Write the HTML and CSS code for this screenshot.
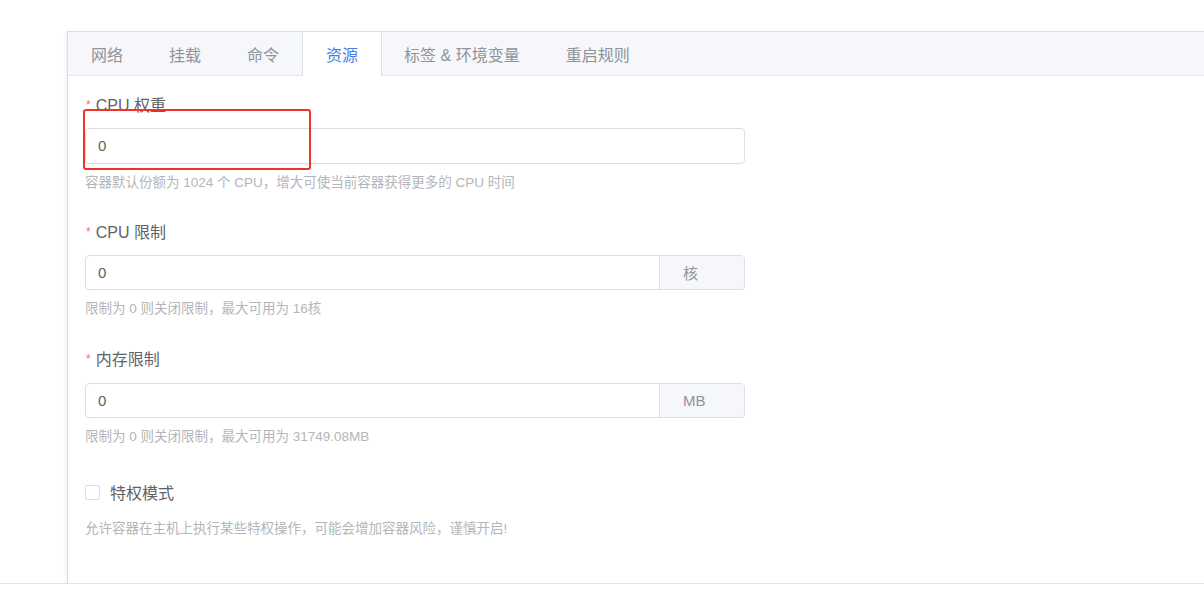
FILE: index.html
```html
<!DOCTYPE html>
<html lang="zh-CN">
<head>
<meta charset="utf-8">
<link rel="stylesheet" href="styles.css">
</head>
<body>
<div class="page">
  <div class="panel">
    <div class="tabs">
      <div class="tab">网络</div>
      <div class="tab">挂载</div>
      <div class="tab">命令</div>
      <div class="tab active">资源</div>
      <div class="tab">标签 &amp; 环境变量</div>
      <div class="tab">重启规则</div>
    </div>
    <div class="content">
      <div class="item">
        <div class="label"><span class="req">*</span>CPU 权重</div>
        <div class="input"><span class="val">0</span></div>
        <div class="help">容器默认份额为 1024 个 CPU，增大可使当前容器获得更多的 CPU 时间</div>
      </div>
      <div class="item">
        <div class="label"><span class="req">*</span>CPU 限制</div>
        <div class="input group"><span class="val">0</span><span class="append">核</span></div>
        <div class="help">限制为 0 则关闭限制，最大可用为 16核</div>
      </div>
      <div class="item item-mem">
        <div class="label"><span class="req">*</span>内存限制</div>
        <div class="input group"><span class="val">0</span><span class="append">MB</span></div>
        <div class="help">限制为 0 则关闭限制，最大可用为 31749.08MB</div>
      </div>
      <div class="item check-item">
        <label class="check"><span class="box"></span><span class="check-text">特权模式</span></label>
        <div class="help">允许容器在主机上执行某些特权操作，可能会增加容器风险，谨慎开启!</div>
      </div>
    </div>
  </div>
</div>
<div class="annot"></div>
</body>
</html>
```
FILE: styles.css
```css
html, body {
  margin: 0;
  padding: 0;
  background: #fff;
  overflow: hidden;
  width: 1204px;
  height: 605px;
  font-family: "Liberation Sans", "Noto Sans CJK SC", sans-serif;
  color: #606266;
}
.page {
  position: relative;
  height: 584px;
  padding: 31px 0 0 67px;
  box-sizing: border-box;
  border-bottom: 1px solid #e2e2e4;
  overflow: hidden;
}
.panel {
  width: 1200px;
  height: 554px;
  box-sizing: border-box;
  border: 1px solid #dcdfe6;
  background: #fff;
  box-shadow: 0 2px 4px rgba(0,0,0,0.08), 0 0 6px rgba(0,0,0,0.03);
}
.tabs {
  display: flex;
  height: 43px;
  background: #f5f7fa;
  border-bottom: 1px solid #e4e7ed;
}
.tab {
  padding: 2px 23px 0;
  height: 41px;
  line-height: 43px;
  font-size: 16px;
  color: #909399;
}
.tab.active {
  background: #fff;
  color: #4a7fe2;
  border-left: 1px solid #dcdfe6;
  border-right: 1px solid #dcdfe6;
  margin: 0 -1px 0 0;
  height: 42px;
}
.content {
  padding: 19px 0 0 17px;
}
.label {
  font-size: 16px;
  line-height: 20px;
  height: 20px;
  color: #606266;
}
.req {
  color: #f56c6c;
  font-size: 12px;
  vertical-align: 2px;
  margin-right: 5px;
  margin-left: 1px;
}
.input {
  margin-top: 13px;
  width: 660px;
  height: 36px;
  box-sizing: border-box;
  border: 1px solid #dcdfe6;
  border-radius: 4px;
  display: flex;
  align-items: center;
  font-size: 15px;
  color: #606266;
  overflow: hidden;
}
.input.group { margin-top: 13px; height: 35px; }
.val {
  flex: 1;
  padding-left: 12px;
  margin-top: -1px;
}
.append {
  width: 85px;
  height: 100%;
  box-sizing: border-box;
  padding-left: 23px;
  background: #f5f7fa;
  border-left: 1px solid #dcdfe6;
  display: flex;
  align-items: center;
  color: #909399;
  font-size: 15px;
}
.help {
  margin-top: 11px;
  font-size: 13.5px;
  line-height: 16px;
  color: #b4b6ba;
}
.item + .item { margin-top: 31px; }
.item.item-mem { margin-top: 32px; }
.item-mem .input { margin-top: 14px; }
.item.check-item { margin-top: 37px; }
.check {
  display: flex;
  align-items: center;
  height: 20px;
}
.box {
  width: 15px;
  height: 15px;
  border: 1px solid #dcdfe6;
  border-radius: 2px;
  box-sizing: border-box;
  margin-left: 0;
  background: #fff;
}
.check-text {
  margin-left: 10px;
  font-size: 16px;
  color: #606266;
}
.check-item .help { margin-top: 19px; }
.annot {
  position: absolute;
  left: 83px;
  top: 109px;
  width: 228px;
  height: 61px;
  box-sizing: border-box;
  border: 2px solid #f0322d;
  border-radius: 3px;
}
```
